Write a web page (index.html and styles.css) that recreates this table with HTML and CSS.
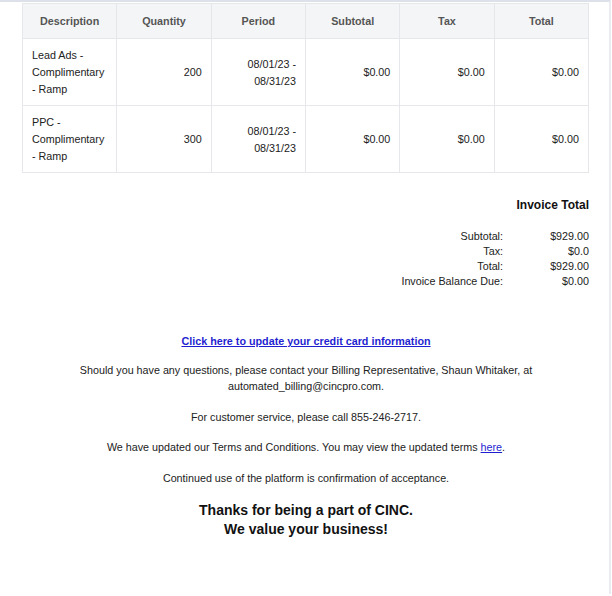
FILE: index.html
```html
<!DOCTYPE html>
<html>
<head>
<meta charset="utf-8">
<link rel="stylesheet" href="styles.css">
</head>
<body>
<div class="page">
  <table class="items">
    <thead>
      <tr>
        <th>Description</th><th>Quantity</th><th>Period</th><th>Subtotal</th><th>Tax</th><th>Total</th>
      </tr>
    </thead>
    <tbody>
      <tr>
        <td class="desc">Lead Ads -<br>Complimentary<br>- Ramp</td>
        <td class="num">200</td>
        <td class="num">08/01/23 -<br>08/31/23</td>
        <td class="num">$0.00</td>
        <td class="num">$0.00</td>
        <td class="num">$0.00</td>
      </tr>
      <tr>
        <td class="desc">PPC -<br>Complimentary<br>- Ramp</td>
        <td class="num">300</td>
        <td class="num">08/01/23 -<br>08/31/23</td>
        <td class="num">$0.00</td>
        <td class="num">$0.00</td>
        <td class="num">$0.00</td>
      </tr>
    </tbody>
  </table>

  <div class="summary">
    <div class="summary-title">Invoice Total</div>
    <div class="summary-grid">
      <span class="lbl">Subtotal:</span><span class="val">$929.00</span>
      <span class="lbl">Tax:</span><span class="val">$0.0</span>
      <span class="lbl">Total:</span><span class="val">$929.00</span>
      <span class="lbl">Invoice Balance Due:</span><span class="val">$0.00</span>
    </div>
  </div>

  <div class="footer">
    <p class="link-line"><a href="#">Click here to update your credit card information</a></p>
    <p>Should you have any questions, please contact your Billing Representative, Shaun Whitaker, at<br>automated_billing@cincpro.com.</p>
    <p>For customer service, please call 855-246-2717.</p>
    <p>We have updated our Terms and Conditions. You may view the updated terms <a href="#" class="plain">here</a>.</p>
    <p>Continued use of the platform is confirmation of acceptance.</p>
    <p class="thanks">Thanks for being a part of CINC.<br>We value your business!</p>
  </div>
</div>
</body>
</html>
```

FILE: styles.css
```css
html, body {
  margin: 0;
  padding: 0;
  background: #ffffff;
}
body {
  font-family: "Liberation Sans", Arial, sans-serif;
  color: #222222;
  font-size: 10.75px;
}
.page {
  width: 611px;
  min-height: 594px;
  border-top: 2px solid #dde2ea;
  border-right: 2px solid #e9edf2;
  padding-top: 1px;
  box-sizing: border-box;
}
.items {
  margin-left: 22px;
  width: 567px;
  border-collapse: collapse;
  table-layout: fixed;
}
.items th, .items td {
  border: 1px solid #e6e7ea;
}
.items th {
  background: #f4f5f7;
  color: #555555;
  font-weight: bold;
  font-size: 10.75px;
  height: 34px;
  padding: 0 8px;
  text-align: center;
}
.items td {
  height: 50px;
  padding: 8px 9px 7px 9px;
  line-height: 17px;
  vertical-align: middle;
}
.items td.desc {
  text-align: left;
}
.items td.num {
  text-align: right;
}
.summary {
  width: 589px;
  display: flex;
  flex-direction: column;
  align-items: flex-end;
  margin-top: 25px;
}
.summary-title {
  font-weight: bold;
  font-size: 12px;
  color: #111111;
  margin-bottom: 17px;
}
.summary-grid {
  display: grid;
  grid-template-columns: auto 86px;
  line-height: 15px;
}
.summary-grid .lbl {
  text-align: right;
}
.summary-grid .val {
  text-align: right;
}
.footer {
  width: 612px;
  text-align: center;
  margin-top: 44px;
  line-height: 16px;
}
.footer p {
  margin: 0 0 14.5px 0;
}
.footer a {
  color: #1f1fd1;
}
.link-line a {
  font-weight: bold;
}
.footer p.link-line {
  margin-bottom: 13px;
}
.footer p.thanks {
  font-size: 14px;
  font-weight: bold;
  line-height: 19px;
  color: #111111;
  margin-top: 15px;
}
```
